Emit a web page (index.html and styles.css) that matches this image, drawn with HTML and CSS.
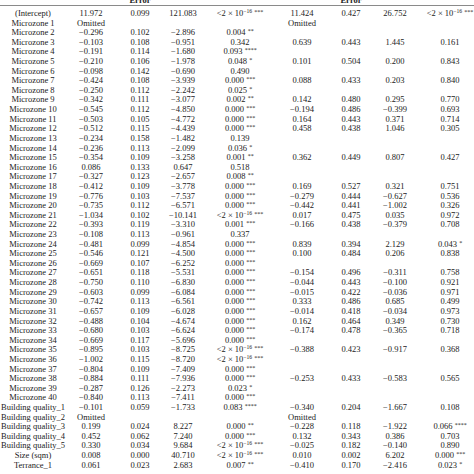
FILE: index.html
```html
<!DOCTYPE html>
<html>
<head>
<meta charset="utf-8">
<link rel="stylesheet" href="styles.css">
</head>
<body>
<div class="table">
  <div class="row head"><span></span><span></span><span>Error</span><span></span><span></span><span></span><span>Error</span><span></span><span></span></div>
  <div class="body">
    <div class="row"><span>(Intercept)</span><span>11.972</span><span>0.099</span><span>121.083</span><span>&lt;2 × 10<sup>−16</sup> <i>***</i></span><span>11.424</span><span>0.427</span><span>26.752</span><span>&lt;2 × 10<sup>−16</sup> <i>***</i></span></div>
    <div class="row"><span>Microzone 1</span><span>Omitted</span><span></span><span></span><span></span><span>Omitted</span><span></span><span></span><span></span></div>
    <div class="row"><span>Microzone 2</span><span>−0.296</span><span>0.102</span><span>−2.896</span><span>0.004 <i>**</i></span><span></span><span></span><span></span><span></span></div>
    <div class="row"><span>Microzone 3</span><span>−0.103</span><span>0.108</span><span>−0.951</span><span>0.342</span><span>0.639</span><span>0.443</span><span>1.445</span><span>0.161</span></div>
    <div class="row"><span>Microzone 4</span><span>−0.191</span><span>0.114</span><span>−1.680</span><span>0.093 <i>****</i></span><span></span><span></span><span></span><span></span></div>
    <div class="row"><span>Microzone 5</span><span>−0.210</span><span>0.106</span><span>−1.978</span><span>0.048 <i>*</i></span><span>0.101</span><span>0.504</span><span>0.200</span><span>0.843</span></div>
    <div class="row"><span>Microzone 6</span><span>−0.098</span><span>0.142</span><span>−0.690</span><span>0.490</span><span></span><span></span><span></span><span></span></div>
    <div class="row"><span>Microzone 7</span><span>−0.424</span><span>0.108</span><span>−3.939</span><span>0.000 <i>***</i></span><span>0.088</span><span>0.433</span><span>0.203</span><span>0.840</span></div>
    <div class="row"><span>Microzone 8</span><span>−0.250</span><span>0.112</span><span>−2.242</span><span>0.025 <i>*</i></span><span></span><span></span><span></span><span></span></div>
    <div class="row"><span>Microzone 9</span><span>−0.342</span><span>0.111</span><span>−3.077</span><span>0.002 <i>**</i></span><span>0.142</span><span>0.480</span><span>0.295</span><span>0.770</span></div>
    <div class="row"><span>Microzone 10</span><span>−0.545</span><span>0.112</span><span>−4.850</span><span>0.000 <i>***</i></span><span>−0.194</span><span>0.486</span><span>−0.399</span><span>0.693</span></div>
    <div class="row"><span>Microzone 11</span><span>−0.503</span><span>0.105</span><span>−4.772</span><span>0.000 <i>***</i></span><span>0.164</span><span>0.443</span><span>0.371</span><span>0.714</span></div>
    <div class="row"><span>Microzone 12</span><span>−0.512</span><span>0.115</span><span>−4.439</span><span>0.000 <i>***</i></span><span>0.458</span><span>0.438</span><span>1.046</span><span>0.305</span></div>
    <div class="row"><span>Microzone 13</span><span>−0.234</span><span>0.158</span><span>−1.482</span><span>0.139</span><span></span><span></span><span></span><span></span></div>
    <div class="row"><span>Microzone 14</span><span>−0.236</span><span>0.113</span><span>−2.099</span><span>0.036 <i>*</i></span><span></span><span></span><span></span><span></span></div>
    <div class="row"><span>Microzone 15</span><span>−0.354</span><span>0.109</span><span>−3.258</span><span>0.001 <i>**</i></span><span>0.362</span><span>0.449</span><span>0.807</span><span>0.427</span></div>
    <div class="row"><span>Microzone 16</span><span>0.086</span><span>0.133</span><span>0.647</span><span>0.518</span><span></span><span></span><span></span><span></span></div>
    <div class="row"><span>Microzone 17</span><span>−0.327</span><span>0.123</span><span>−2.657</span><span>0.008 <i>**</i></span><span></span><span></span><span></span><span></span></div>
    <div class="row"><span>Microzone 18</span><span>−0.412</span><span>0.109</span><span>−3.778</span><span>0.000 <i>***</i></span><span>0.169</span><span>0.527</span><span>0.321</span><span>0.751</span></div>
    <div class="row"><span>Microzone 19</span><span>−0.776</span><span>0.103</span><span>−7.537</span><span>0.000 <i>***</i></span><span>−0.279</span><span>0.444</span><span>−0.627</span><span>0.536</span></div>
    <div class="row"><span>Microzone 20</span><span>−0.735</span><span>0.112</span><span>−6.571</span><span>0.000 <i>***</i></span><span>−0.442</span><span>0.441</span><span>−1.002</span><span>0.326</span></div>
    <div class="row"><span>Microzone 21</span><span>−1.034</span><span>0.102</span><span>−10.141</span><span>&lt;2 × 10<sup>−16</sup> <i>***</i></span><span>0.017</span><span>0.475</span><span>0.035</span><span>0.972</span></div>
    <div class="row"><span>Microzone 22</span><span>−0.393</span><span>0.119</span><span>−3.310</span><span>0.001 <i>***</i></span><span>−0.166</span><span>0.438</span><span>−0.379</span><span>0.708</span></div>
    <div class="row"><span>Microzone 23</span><span>−0.108</span><span>0.113</span><span>−0.961</span><span>0.337</span><span></span><span></span><span></span><span></span></div>
    <div class="row"><span>Microzone 24</span><span>−0.481</span><span>0.099</span><span>−4.854</span><span>0.000 <i>***</i></span><span>0.839</span><span>0.394</span><span>2.129</span><span>0.043 <i>*</i></span></div>
    <div class="row"><span>Microzone 25</span><span>−0.546</span><span>0.121</span><span>−4.500</span><span>0.000 <i>***</i></span><span>0.100</span><span>0.484</span><span>0.206</span><span>0.838</span></div>
    <div class="row"><span>Microzone 26</span><span>−0.669</span><span>0.107</span><span>−6.252</span><span>0.000 <i>***</i></span><span></span><span></span><span></span><span></span></div>
    <div class="row"><span>Microzone 27</span><span>−0.651</span><span>0.118</span><span>−5.531</span><span>0.000 <i>***</i></span><span>−0.154</span><span>0.496</span><span>−0.311</span><span>0.758</span></div>
    <div class="row"><span>Microzone 28</span><span>−0.750</span><span>0.110</span><span>−6.830</span><span>0.000 <i>***</i></span><span>−0.044</span><span>0.443</span><span>−0.100</span><span>0.921</span></div>
    <div class="row"><span>Microzone 29</span><span>−0.603</span><span>0.099</span><span>−6.084</span><span>0.000 <i>***</i></span><span>−0.015</span><span>0.422</span><span>−0.036</span><span>0.971</span></div>
    <div class="row"><span>Microzone 30</span><span>−0.742</span><span>0.113</span><span>−6.561</span><span>0.000 <i>***</i></span><span>0.333</span><span>0.486</span><span>0.685</span><span>0.499</span></div>
    <div class="row"><span>Microzone 31</span><span>−0.657</span><span>0.109</span><span>−6.028</span><span>0.000 <i>***</i></span><span>−0.014</span><span>0.418</span><span>−0.034</span><span>0.973</span></div>
    <div class="row"><span>Microzone 32</span><span>−0.488</span><span>0.104</span><span>−4.674</span><span>0.000 <i>***</i></span><span>0.162</span><span>0.464</span><span>0.349</span><span>0.730</span></div>
    <div class="row"><span>Microzone 33</span><span>−0.680</span><span>0.103</span><span>−6.624</span><span>0.000 <i>***</i></span><span>−0.174</span><span>0.478</span><span>−0.365</span><span>0.718</span></div>
    <div class="row"><span>Microzone 34</span><span>−0.669</span><span>0.117</span><span>−5.696</span><span>0.000 <i>***</i></span><span></span><span></span><span></span><span></span></div>
    <div class="row"><span>Microzone 35</span><span>−0.895</span><span>0.103</span><span>−8.725</span><span>&lt;2 × 10<sup>−16</sup> <i>***</i></span><span>−0.388</span><span>0.423</span><span>−0.917</span><span>0.368</span></div>
    <div class="row"><span>Microzone 36</span><span>−1.002</span><span>0.115</span><span>−8.720</span><span>&lt;2 × 10<sup>−16</sup> <i>***</i></span><span></span><span></span><span></span><span></span></div>
    <div class="row"><span>Microzone 37</span><span>−0.804</span><span>0.109</span><span>−7.409</span><span>0.000 <i>***</i></span><span></span><span></span><span></span><span></span></div>
    <div class="row"><span>Microzone 38</span><span>−0.884</span><span>0.111</span><span>−7.936</span><span>0.000 <i>***</i></span><span>−0.253</span><span>0.433</span><span>−0.583</span><span>0.565</span></div>
    <div class="row"><span>Microzone 39</span><span>−0.287</span><span>0.126</span><span>−2.273</span><span>0.023 <i>*</i></span><span></span><span></span><span></span><span></span></div>
    <div class="row"><span>Microzone 40</span><span>−0.840</span><span>0.113</span><span>−7.411</span><span>0.000 <i>***</i></span><span></span><span></span><span></span><span></span></div>
    <div class="row"><span>Building quality_1</span><span>−0.101</span><span>0.059</span><span>−1.733</span><span>0.083 <i>****</i></span><span>−0.340</span><span>0.204</span><span>−1.667</span><span>0.108</span></div>
    <div class="row"><span>Building quality_2</span><span>Omitted</span><span></span><span></span><span></span><span>Omitted</span><span></span><span></span><span></span></div>
    <div class="row"><span>Building quality_3</span><span>0.199</span><span>0.024</span><span>8.227</span><span>0.000 <i>**</i></span><span>−0.228</span><span>0.118</span><span>−1.922</span><span>0.066 <i>****</i></span></div>
    <div class="row"><span>Building quality_4</span><span>0.452</span><span>0.062</span><span>7.240</span><span>0.000 <i>***</i></span><span>0.132</span><span>0.343</span><span>0.386</span><span>0.703</span></div>
    <div class="row"><span>Building quality_5</span><span>0.330</span><span>0.034</span><span>9.684</span><span>&lt;2 × 10<sup>−16</sup> <i>***</i></span><span>−0.025</span><span>0.182</span><span>−0.140</span><span>0.890</span></div>
    <div class="row"><span>Size (sqm)</span><span>0.008</span><span>0.000</span><span>40.710</span><span>&lt;2 × 10<sup>−16</sup> <i>***</i></span><span>0.010</span><span>0.002</span><span>6.202</span><span>0.000 <i>***</i></span></div>
    <div class="row"><span>Terrance_1</span><span>0.061</span><span>0.023</span><span>2.683</span><span>0.007 <i>**</i></span><span>−0.410</span><span>0.170</span><span>−2.416</span><span>0.023 <i>*</i></span></div>
  </div>
</div>
</body>
</html>
```
FILE: styles.css
```css
html, body {
  margin: 0;
  padding: 0;
  background: #ffffff;
  overflow: hidden;
}
body {
  width: 474px;
  height: 474px;
  font-family: "Liberation Serif", "Times New Roman", serif;
  font-size: 8.5px;
  color: #222222;
}
.table {
  width: 486px;
  margin-top: -4px;
}
.row {
  display: grid;
  grid-template-columns: 66px 50px 48px 38px 76px 48px 50px 38px 72px;
  height: 9.62px;
  line-height: 9.62px;
}
.row span {
  text-align: center;
  white-space: nowrap;
}
.head {
  height: 9px;
  line-height: 9px;
  font-weight: bold;
  border-bottom: 1.6px solid #8a8a8a;
}
.body {
  padding-top: 3px;
}
sup {
  font-size: 5.6px;
  line-height: 0;
  vertical-align: 3px;
}
i {
  font-style: normal;
  font-size: 6px;
  vertical-align: 2px;
  line-height: 0;
}
```
